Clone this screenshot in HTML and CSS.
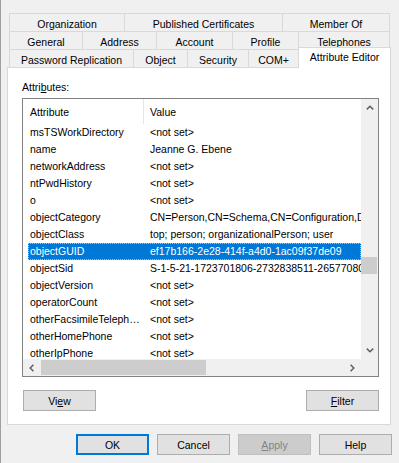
FILE: index.html
```html
<!DOCTYPE html>
<html>
<head>
<meta charset="utf-8">
<link rel="stylesheet" href="styles.css">
</head>
<body>
<div class="window">
  <div class="tabs">
    <div class="tabrow">
      <div class="tab t-org">Organization</div>
      <div class="tab t-pub">Published Certificates</div>
      <div class="tab t-mem">Member Of</div>
    </div>
    <div class="tabrow">
      <div class="tab t-gen">General</div>
      <div class="tab t-addr">Address</div>
      <div class="tab t-acc">Account</div>
      <div class="tab t-prof">Profile</div>
      <div class="tab t-tel">Telephones</div>
    </div>
    <div class="tabrow row3">
      <div class="tab t-pwd">Password Replication</div>
      <div class="tab t-obj">Object</div>
      <div class="tab t-sec">Security</div>
      <div class="tab t-com">COM+</div>
      <div class="tab t-attr selected">Attribute Editor</div>
    </div>
  </div>
  <div class="panel">
    <div class="label">Attri<u>b</u>utes:</div>
    <div class="listview">
      <div class="lv-main">
        <div class="lv-header">
          <div class="hcell hc1">Attribute</div>
          <div class="hcell hc2">Value</div>
        </div>
        <div class="row"><span class="c1">msTSWorkDirectory</span><span class="c2">&lt;not set&gt;</span></div>
        <div class="row"><span class="c1">name</span><span class="c2">Jeanne G. Ebene</span></div>
        <div class="row"><span class="c1">networkAddress</span><span class="c2">&lt;not set&gt;</span></div>
        <div class="row"><span class="c1">ntPwdHistory</span><span class="c2">&lt;not set&gt;</span></div>
        <div class="row"><span class="c1">o</span><span class="c2">&lt;not set&gt;</span></div>
        <div class="row"><span class="c1">objectCategory</span><span class="c2">CN=Person,CN=Schema,CN=Configuration,DC=contoso,DC=com</span></div>
        <div class="row"><span class="c1">objectClass</span><span class="c2">top; person; organizationalPerson; user</span></div>
        <div class="row sel"><span class="c1">objectGUID</span><span class="c2">ef17b166-2e28-414f-a4d0-1ac09f37de09</span></div>
        <div class="row"><span class="c1">objectSid</span><span class="c2">S-1-5-21-1723701806-2732838511-2657708001-1104</span></div>
        <div class="row"><span class="c1">objectVersion</span><span class="c2">&lt;not set&gt;</span></div>
        <div class="row"><span class="c1">operatorCount</span><span class="c2">&lt;not set&gt;</span></div>
        <div class="row"><span class="c1">otherFacsimileTelephoneNumber</span><span class="c2">&lt;not set&gt;</span></div>
        <div class="row"><span class="c1">otherHomePhone</span><span class="c2">&lt;not set&gt;</span></div>
        <div class="row"><span class="c1">otherIpPhone</span><span class="c2">&lt;not set&gt;</span></div>
        <div class="row"><span class="c1">otherMailbox</span><span class="c2">&lt;not set&gt;</span></div>
      </div>
      <div class="vscroll">
        <div class="sb-btn"><svg width="8" height="5" viewBox="0 0 8 5"><path d="M0.8 4.4 L4 1.2 L7.2 4.4" fill="none" stroke="#606060" stroke-width="1.5"/></svg></div>
        <div class="vtrack"><div class="vthumb"></div></div>
        <div class="sb-btn"><svg width="8" height="5" viewBox="0 0 8 5"><path d="M0.8 0.6 L4 3.8 L7.2 0.6" fill="none" stroke="#606060" stroke-width="1.5"/></svg></div>
      </div>
      <div class="hscroll">
        <div class="sb-btn h"><svg width="5" height="8" viewBox="0 0 5 8"><path d="M4.4 0.8 L1.2 4 L4.4 7.2" fill="none" stroke="#606060" stroke-width="1.5"/></svg></div>
        <div class="htrack"><div class="hthumb"></div></div>
        <div class="sb-btn h"><svg width="5" height="8" viewBox="0 0 5 8"><path d="M0.6 0.8 L3.8 4 L0.6 7.2" fill="none" stroke="#606060" stroke-width="1.5"/></svg></div>
      </div>
      <div class="corner"></div>
    </div>
    <div class="panel-buttons">
      <button class="btn">Vi<u>e</u>w</button>
      <button class="btn"><u>F</u>ilter</button>
    </div>
  </div>
  <div class="footer">
    <button class="btn default">OK</button>
    <button class="btn">Cancel</button>
    <button class="btn disabled"><u>A</u>pply</button>
    <button class="btn">Help</button>
  </div>
</div>
</body>
</html>
```

FILE: styles.css
```css
html, body {
  margin: 0;
  padding: 0;
}
body {
  background: #f0f0f0;
  font-family: "Liberation Sans", Arial, sans-serif;
  font-size: 10.5px;
  color: #000;
}
.window {
  width: 399px;
  height: 463px;
  box-sizing: border-box;
  border-left: 1px solid #a0a0a0;
  overflow: hidden;
}

/* Tabs */
.tabs {
  padding: 13px 0 0 8px;
}
.tabrow {
  display: flex;
  height: 19px;
}
.tabrow + .tabrow {
  margin-top: -1px;
}
.tab {
  box-sizing: border-box;
  flex: none;
  height: 19px;
  border: 1px solid #d9d9d9;
  background: #f0f0f0;
  display: flex;
  align-items: center;
  justify-content: center;
  padding-top: 2px;
  white-space: nowrap;
}
.tab + .tab {
  margin-left: -1px;
}
.row3 {
  height: 18px;
  align-items: flex-end;
}
.row3 .tab {
  height: 18px;
  border-bottom: none;
}
.row3 .tab.selected {
  height: 21px;
  margin-bottom: -1px;
  background: #fff;
  position: relative;
  z-index: 1;
  padding-top: 0;
  padding-bottom: 2px;
}
.t-org { width: 116px; }
.t-pub { width: 159px; }
.t-mem { width: 108px; }
.t-gen { width: 74px; }
.t-addr { width: 75px; }
.t-acc { width: 77px; }
.t-prof { width: 67px; }
.t-tel { width: 92px; }
.t-pwd { width: 125px; }
.t-obj { width: 55px; }
.t-sec { width: 62px; }
.t-com { width: 51px; }
.t-attr { width: 93px; }

/* Panel */
.panel {
  margin-left: 6px;
  width: 384px;
  height: 358px;
  box-sizing: border-box;
  border: 1px solid #d9d9d9;
  background: #fff;
  padding: 13px 0 0 14px;
}
.label {
  height: 13px;
  line-height: 13px;
  margin-bottom: 4px;
}

/* List view */
.listview {
  width: 357px;
  height: 279px;
  box-sizing: border-box;
  border: 1px solid #828282;
  display: grid;
  grid-template-columns: 1fr 17px;
  grid-template-rows: 1fr 17px;
  background: #fff;
}
.lv-main {
  overflow: hidden;
  min-width: 0;
  min-height: 0;
}
.lv-header {
  display: flex;
  height: 25px;
}
.hcell {
  display: flex;
  align-items: center;
  box-sizing: border-box;
  white-space: nowrap;
}
.hc1 {
  width: 121px;
  padding-left: 7px;
  border-right: 1px solid #e5e5e5;
}
.hc2 {
  padding-left: 6px;
}
.row {
  display: flex;
  height: 17px;
  line-height: 17px;
  margin-left: 5px;
  white-space: nowrap;
  overflow: hidden;
}
.row .c1 {
  flex: none;
  width: 115px;
  box-sizing: border-box;
  padding-left: 2px;
  overflow: hidden;
  text-overflow: ellipsis;
}
.row .c2 {
  flex: none;
  padding-left: 7px;
}
.row.sel {
  background: #0078d7;
  color: #fff;
  outline: 1px dotted #f7b46e;
  outline-offset: -1px;
}

/* Scrollbars */
.vscroll {
  display: flex;
  flex-direction: column;
  background: #f0f0f0;
}
.sb-btn {
  flex: none;
  height: 17px;
  display: flex;
  align-items: center;
  justify-content: center;
}
.sb-btn.h {
  width: 17px;
  height: 17px;
}
.vtrack {
  flex: 1;
}
.vthumb {
  margin: 141px 1px 0 0;
  height: 17px;
  background: #cdcdcd;
}
.hscroll {
  display: flex;
  background: #f0f0f0;
}
.htrack {
  flex: 1;
}
.hthumb {
  margin: 1px 0 0 1px;
  width: 165px;
  height: 15px;
  background: #cdcdcd;
}
.corner {
  background: #f0f0f0;
}

/* Buttons */
.btn {
  box-sizing: border-box;
  width: 73px;
  height: 21px;
  border: 1px solid #adadad;
  background: #e1e1e1;
  font: inherit;
  color: #000;
  padding: 0;
  margin: 0;
  display: flex;
  align-items: center;
  justify-content: center;
}
.panel-buttons {
  display: flex;
  justify-content: space-between;
  width: 357px;
  box-sizing: border-box;
  padding-left: 1px;
  margin-top: 13px;
}
.footer {
  display: flex;
  justify-content: flex-end;
  gap: 8px;
  margin-top: 9px;
  padding-right: 7px;
}
.btn.default {
  border: 2px solid #0078d7;
}
.btn.disabled {
  background: #cccccc;
  border-color: #bfbfbf;
  color: #838383;
}
```
